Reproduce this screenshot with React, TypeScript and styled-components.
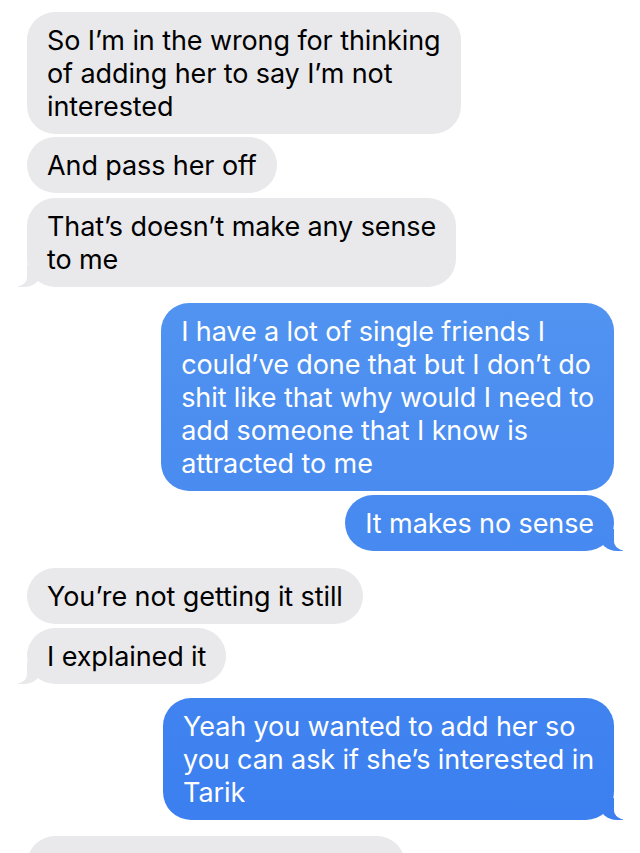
import styled, { createGlobalStyle, css } from 'styled-components';

type Message = {
  id: number;
  from: 'them' | 'me';
  lines: string[];
  tail?: boolean;
  gap?: number;
  width?: number;
};

const messages: Message[] = [
  {
    id: 1,
    from: 'them',
    lines: ['So I’m in the wrong for thinking', 'of adding her to say I’m not', 'interested'],
    gap: 12,
  },
  { id: 2, from: 'them', lines: ['And pass her off'], gap: 3 },
  { id: 3, from: 'them', lines: ['That’s doesn’t make any sense', 'to me'], tail: true, gap: 5 },
  {
    id: 4,
    from: 'me',
    lines: [
      'I have a lot of single friends I',
      'could’ve done that but I don’t do',
      'shit like that why would I need to',
      'add someone that I know is',
      'attracted to me',
    ],
    gap: 16,
  },
  { id: 5, from: 'me', lines: ['It makes no sense'], tail: true, gap: 4 },
  { id: 6, from: 'them', lines: ['You’re not getting it still'], gap: 17 },
  { id: 7, from: 'them', lines: ['I explained it'], tail: true, gap: 4 },
  {
    id: 8,
    from: 'me',
    lines: ['Yeah you wanted to add her so', 'you can ask if she’s interested in', 'Tarik'],
    tail: true,
    gap: 14,
  },
  // next message, cut off by the bottom of the screenshot
  { id: 9, from: 'them', lines: [], gap: 16, width: 378 },
];

export default function App() {
  return (
    <>
      <GlobalStyle />
      <Thread>
        {messages.map((m) => (
          <Row key={m.id} $from={m.from} $gap={m.gap ?? 0}>
            <Bubble $from={m.from} $tail={!!m.tail} $width={m.width}>
              {m.lines.map((line, i) => (
                <Line key={i}>{line}</Line>
              ))}
            </Bubble>
          </Row>
        ))}
      </Thread>
    </>
  );
}

const GlobalStyle = createGlobalStyle`
  html, body {
    margin: 0;
    padding: 0;
    background: #ffffff;
  }
  body {
    font-family: Inter, "Liberation Sans", sans-serif;
    -webkit-font-smoothing: antialiased;
  }
`;

const Thread = styled.div`
  display: flex;
  flex-direction: column;
  width: 640px;
  height: 853px;
  overflow: hidden;
  padding: 0 26px 0 27px;
  box-sizing: border-box;
`;

const Row = styled.div<{ $from: 'them' | 'me'; $gap: number }>`
  display: flex;
  flex-shrink: 0;
  justify-content: ${({ $from }) => ($from === 'me' ? 'flex-end' : 'flex-start')};
  margin-top: ${({ $gap }) => $gap}px;
`;

const blueGradient = css`
  background: linear-gradient(180deg, #5fa1f2 0px, #4c8ef0 420px, #3a7ef0 853px);
  background-attachment: fixed;
`;

const Bubble = styled.div<{ $from: 'them' | 'me'; $tail: boolean; $width?: number }>`
  position: relative;
  padding: 12px 20px 11px 20px;
  border-radius: 28px;
  font-size: 27px;
  line-height: 33px;
  letter-spacing: -0.1px;
  ${({ $width }) =>
    $width &&
    css`
      width: ${$width}px;
      height: 56px;
      box-sizing: border-box;
    `}
  ${({ $from }) =>
    $from === 'me'
      ? css`
          ${blueGradient};
          color: #ffffff;
        `
      : css`
          background: #e9e9eb;
          color: #000000;
        `}

  ${({ $tail, $from }) =>
    $tail &&
    ($from === 'them'
      ? css`
          &::before {
            content: '';
            position: absolute;
            bottom: 0;
            left: -9px;
            width: 24px;
            height: 22px;
            background: #e9e9eb;
            border-bottom-right-radius: 18px 16px;
          }
          &::after {
            content: '';
            position: absolute;
            bottom: 0;
            left: -12px;
            width: 12px;
            height: 22px;
            background: #ffffff;
            border-bottom-right-radius: 12px 10px;
          }
        `
      : css`
          &::before {
            content: '';
            position: absolute;
            bottom: 0;
            right: -9px;
            width: 24px;
            height: 22px;
            ${blueGradient};
            border-bottom-left-radius: 18px 16px;
          }
          &::after {
            content: '';
            position: absolute;
            bottom: 0;
            right: -12px;
            width: 12px;
            height: 22px;
            background: #ffffff;
            border-bottom-left-radius: 12px 10px;
          }
        `)}
`;

const Line = styled.div`
  position: relative;
  z-index: 1;
  white-space: nowrap;
`;
